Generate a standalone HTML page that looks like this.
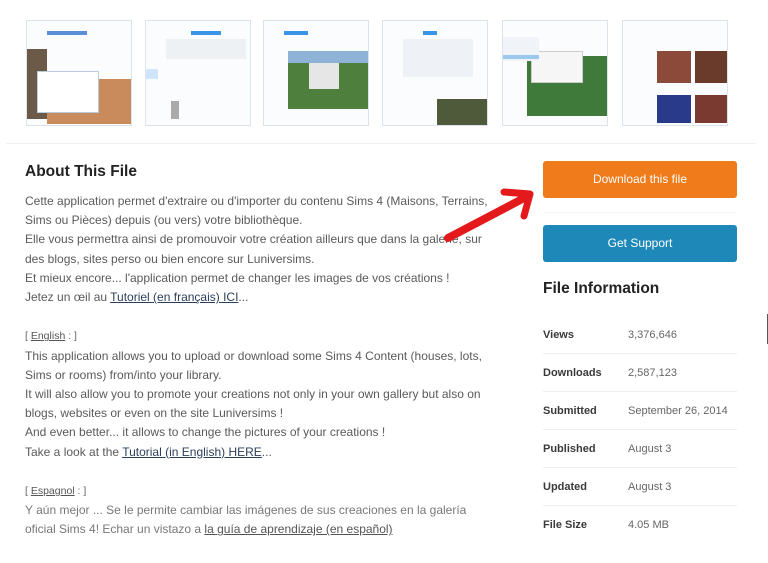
<!DOCTYPE html>
<html><head><meta charset="utf-8"><style>
body{margin:0;width:768px;height:563px;background:#fff;font-family:"Liberation Sans",Arial,sans-serif;position:relative;overflow:hidden}
.th{position:absolute;top:20px;width:106px;height:106px;border:1px solid #dde3ea;background:#fbfcfd;box-sizing:border-box;overflow:hidden}
.th i{position:absolute;display:block}
.sep{position:absolute;left:6px;right:12px;top:143px;height:1px;background:#eef0f2}
h2{position:absolute;margin:0;font-size:15.5px;font-weight:bold;color:#222}
.txt{position:absolute;left:25px;top:192px;width:490px;font-size:12px;line-height:19.2px;color:#5a5a5a;white-space:nowrap}
.txt a{color:#2a3f5a;text-decoration:underline}
.sm{font-size:10.5px;color:#666}
.btn{position:absolute;left:543px;width:194px;height:37px;border-radius:3px;color:#fff;font-size:12px;text-align:center;line-height:37px}
.row{position:absolute;left:543px;width:194px;height:38px;border-bottom:1px solid #eceef0;font-size:11px;box-sizing:border-box}
.row b{position:absolute;left:0;top:13px;color:#3a3a3a}
.row span{position:absolute;left:85px;top:13px;color:#666}
</style></head><body>
<div class="th" style="left:26px"><i style="left:0;top:28px;width:20px;height:70px;background:#6b5a48"></i><i style="left:20px;top:58px;width:86px;height:45px;background:#c98a5c"></i><i style="left:10px;top:50px;width:60px;height:40px;background:#fff;border:1px solid #bcd"></i><i style="left:20px;top:10px;width:40px;height:4px;background:#5a8fd8"></i></div>
<div class="th" style="left:145px"><i style="left:45px;top:10px;width:30px;height:4px;background:#3a95e8"></i><i style="left:0;top:48px;width:12px;height:10px;background:#cfe5fb"></i><i style="left:20px;top:18px;width:80px;height:20px;background:#eef1f4"></i><i style="left:25px;top:80px;width:8px;height:18px;background:#aaa"></i></div>
<div class="th" style="left:263px"><i style="left:20px;top:10px;width:24px;height:4px;background:#3a95e8"></i><i style="left:24px;top:30px;width:80px;height:58px;background:#4f7f3c"></i><i style="left:45px;top:40px;width:30px;height:28px;background:#e6e6e6"></i><i style="left:24px;top:30px;width:80px;height:12px;background:#8fb3d6"></i></div>
<div class="th" style="left:382px"><i style="left:40px;top:10px;width:14px;height:4px;background:#3a95e8"></i><i style="left:20px;top:18px;width:70px;height:38px;background:#eef1f6"></i><i style="left:54px;top:78px;width:52px;height:36px;background:#4e5a3a"></i></div>
<div class="th" style="left:502px"><i style="left:24px;top:35px;width:82px;height:60px;background:#3f7a3a"></i><i style="left:28px;top:30px;width:50px;height:30px;background:#f6f6f6;border:1px solid #ccc"></i><i style="left:0;top:16px;width:36px;height:24px;background:#f0f4f8"></i><i style="left:0;top:34px;width:36px;height:4px;background:#9cc8f0"></i></div>
<div class="th" style="left:622px"><i style="left:34px;top:30px;width:34px;height:32px;background:#8b4a3a"></i><i style="left:72px;top:30px;width:34px;height:32px;background:#6a3a2a"></i><i style="left:34px;top:74px;width:34px;height:28px;background:#2a3a8a"></i><i style="left:72px;top:74px;width:34px;height:28px;background:#7a3a30"></i></div>
<div class="sep"></div>
<h2 style="left:25px;top:163px">About This File</h2>
<div class="txt">Cette application permet d'extraire ou d'importer du contenu Sims 4 (Maisons, Terrains,<br>Sims ou Pièces) depuis (ou vers) votre bibliothèque.<br>Elle vous permettra ainsi de promouvoir votre création ailleurs que dans la galerie, sur<br>des blogs, sites perso ou bien encore sur Luniversims.<br>Et mieux encore... l'application permet de changer les images de vos créations !<br>Jetez un œil au <a>Tutoriel (en français) ICI</a>...<br><br>
<span class="sm">[ <a style="color:#555">English</a> : ]</span><br>This application allows you to upload or download some Sims 4 Content (houses, lots,<br>Sims or rooms) from/into your library.<br>It will also allow you to promote your creations not only in your own gallery but also on<br>blogs, websites or even on the site Luniversims !<br>And even better... it allows to change the pictures of your creations !<br>Take a look at the <a>Tutorial (in English) HERE</a>...<br><br>
<span class="sm">[ <a style="color:#555">Espagnol</a> : ]</span><br><span style="color:#777">Y aún mejor ... Se le permite cambiar las imágenes de sus creaciones en la galería<br>oficial Sims 4! Echar un vistazo a <a style="color:#555">la guía de aprendizaje (en español)</a></span></div>
<svg style="position:absolute;left:440px;top:180px" width="100" height="70"><path d="M8 58 L88 16" stroke="#e3191c" stroke-width="8" stroke-linecap="round" fill="none"/><path d="M64 12 L90 14 L84 36" stroke="#e3191c" stroke-width="7" stroke-linecap="round" stroke-linejoin="round" fill="none"/></svg>
<div class="btn" style="top:161px;background:#ef7b1b">Download this file</div>
<div style="position:absolute;left:543px;top:212px;width:194px;height:1px;background:#f3f3f3"></div>
<div class="btn" style="top:225px;background:#1e89b9">Get Support</div>
<h2 style="left:543px;top:280px">File Information</h2>
<div class="row" style="top:316px"><b>Views</b><span>3,376,646</span></div>
<div class="row" style="top:354px"><b>Downloads</b><span>2,587,123</span></div>
<div class="row" style="top:392px"><b>Submitted</b><span>September 26, 2014</span></div>
<div class="row" style="top:430px"><b>Published</b><span>August 3</span></div>
<div class="row" style="top:468px"><b>Updated</b><span>August 3</span></div>
<div class="row" style="top:506px;border:none"><b>File Size</b><span>4.05 MB</span></div>
<div style="position:absolute;left:767px;top:314px;width:1px;height:30px;background:#555"></div>
</body></html>
